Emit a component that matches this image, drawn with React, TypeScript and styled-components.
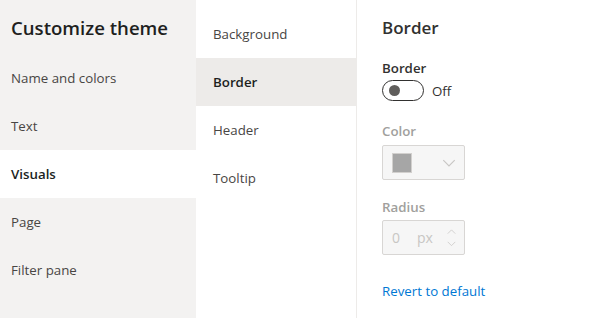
import React from 'react';
import styled, { createGlobalStyle } from 'styled-components';

const Global = createGlobalStyle`
  html, body {
    margin: 0;
    padding: 0;
    background: #fff;
  }
  * {
    box-sizing: border-box;
  }
`;

const Shell = styled.div`
  display: flex;
  width: 600px;
  height: 318px;
  font-family: 'Open Sans', 'Noto Sans', sans-serif;
  color: #323130;
  overflow: hidden;
`;

const Sidebar = styled.nav`
  width: 196px;
  flex-shrink: 0;
  background: #f3f2f1;
  display: flex;
  flex-direction: column;
`;

const Title = styled.h1`
  margin: 0;
  height: 54px;
  display: flex;
  align-items: center;
  padding-left: 11px;
  font-size: 18.6px;
  font-weight: 600;
  color: #201f1e;
`;

const NavItem = styled.div<{ $active?: boolean }>`
  height: 48px;
  display: flex;
  align-items: center;
  padding-left: 11px;
  font-size: 13.3px;
  background: ${(p) => (p.$active ? '#ffffff' : 'transparent')};
  font-weight: ${(p) => (p.$active ? 600 : 400)};
  color: ${(p) => (p.$active ? '#201f1e' : '#484644')};
`;

const SubNav = styled.div`
  width: 161px;
  flex-shrink: 0;
  border-right: 1px solid #edebe9;
  padding-top: 10px;
  display: flex;
  flex-direction: column;
`;

const SubItem = styled.div<{ $active?: boolean }>`
  height: 48px;
  display: flex;
  align-items: center;
  padding-left: 17px;
  font-size: 13.3px;
  background: ${(p) => (p.$active ? '#edebe9' : 'transparent')};
  font-weight: ${(p) => (p.$active ? 600 : 400)};
  color: ${(p) => (p.$active ? '#201f1e' : '#484644')};
`;

const Pane = styled.section`
  flex: 1;
  padding-left: 25px;
  display: flex;
  flex-direction: column;
  align-items: flex-start;
`;

const PaneTitle = styled.h2`
  margin: 16px 0 0;
  font-size: 17px;
  line-height: 24px;
  font-weight: 600;
  color: #323130;
`;

const Label = styled.div<{ $disabled?: boolean; $top: number }>`
  font-size: 13.3px;
  line-height: 20px;
  font-weight: 600;
  color: ${(p) => (p.$disabled ? '#a19f9d' : '#323130')};
  margin-top: ${(p) => p.$top}px;
`;

const ToggleRow = styled.div`
  display: flex;
  align-items: center;
  gap: 8px;
  margin-top: 2px;
  font-size: 13.3px;
  color: #323130;
`;

const Track = styled.div`
  width: 42px;
  height: 21px;
  border: 1px solid #323130;
  border-radius: 11px;
  position: relative;
`;

const Knob = styled.div`
  position: absolute;
  left: 6px;
  top: 4px;
  width: 11px;
  height: 11px;
  border-radius: 50%;
  background: #605e5c;
`;

const Field = styled.div<{ $top: number }>`
  width: 83px;
  height: 35px;
  margin-top: ${(p) => p.$top}px;
  border: 1px solid #d8d6d4;
  border-radius: 2px;
  background: #f6f6f6;
  display: flex;
  align-items: center;
  padding-left: 9px;
  padding-right: 8px;
  font-size: 14px;
  color: #c8c6c4;
`;

const Swatch = styled.div`
  width: 20px;
  height: 20px;
  background: #a6a6a6;
  border: 1px solid #d2d0ce;
`;

const Spacer = styled.div`
  flex: 1;
`;

const Unit = styled.span`
  margin-left: 17px;
`;

const Spinner = styled.div`
  display: flex;
  flex-direction: column;
  gap: 6px;
`;

const Link = styled.a`
  margin-top: 27px;
  font-size: 13.3px;
  color: #0078d4;
  text-decoration: none;
`;

const Chevron = ({ up, size = 12 }: { up?: boolean; size?: number }) => (
  <svg width={size} height={size / 2 + 1} viewBox="0 0 12 7" fill="none">
    <path
      d={up ? 'M1 6 L6 1 L11 6' : 'M1 1 L6 6 L11 1'}
      stroke="#c8c6c4"
      strokeWidth="1"
    />
  </svg>
);

export default function App() {
  return (
    <>
      <Global />
      <Shell>
        <Sidebar>
          <Title>Customize theme</Title>
          <NavItem>Name and colors</NavItem>
          <NavItem>Text</NavItem>
          <NavItem $active>Visuals</NavItem>
          <NavItem>Page</NavItem>
          <NavItem>Filter pane</NavItem>
        </Sidebar>
        <SubNav>
          <SubItem>Background</SubItem>
          <SubItem $active>Border</SubItem>
          <SubItem>Header</SubItem>
          <SubItem>Tooltip</SubItem>
        </SubNav>
        <Pane>
          <PaneTitle>Border</PaneTitle>
          <Label $top={18}>Border</Label>
          <ToggleRow>
            <Track>
              <Knob />
            </Track>
            Off
          </ToggleRow>
          <Label $disabled $top={20}>
            Color
          </Label>
          <Field $top={4}>
            <Swatch />
            <Spacer />
            <Chevron size={14} />
          </Field>
          <Label $disabled $top={17}>
            Radius
          </Label>
          <Field $top={3}>
            0<Unit>px</Unit>
            <Spacer />
            <Spinner>
              <Chevron up size={9} />
              <Chevron size={9} />
            </Spinner>
          </Field>
          <Link href="#">Revert to default</Link>
        </Pane>
      </Shell>
    </>
  );
}
